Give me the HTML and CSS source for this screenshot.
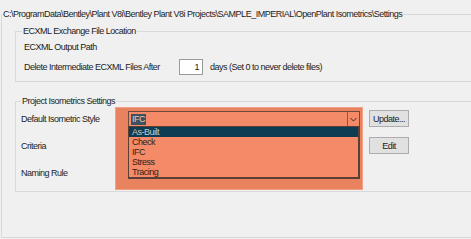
FILE: index.html
```html
<!DOCTYPE html>
<html>
<head>
<meta charset="utf-8">
<link rel="stylesheet" href="styles.css">
</head>
<body>
<fieldset class="outer">
  <legend class="path">C:\ProgramData\Bentley\Plant V8i\Bentley Plant V8i Projects\SAMPLE_IMPERIAL\OpenPlant Isometrics\Settings</legend>
  <fieldset class="grp ecxml">
    <legend>ECXML Exchange File Location</legend>
    <div class="line">ECXML Output Path</div>
    <div class="line del">
      <span class="del-label">Delete Intermediate ECXML Files After</span>
      <span class="num">1</span>
      <span class="hint">days (Set 0 to never delete files)</span>
    </div>
  </fieldset>
  <fieldset class="grp iso">
    <legend>Project Isometrics Settings</legend>
    <div class="grid">
      <div class="highlight"></div>
      <span class="lbl">Default Isometric Style</span>
      <div class="combo">
        <span class="combo-text"><span class="sel">IFC</span></span>
        <span class="arrow"><svg width="7" height="5" viewBox="0 0 7 5"><path d="M0.5 1 L3.5 4 L6.5 1" fill="none" stroke="#3b2a24" stroke-width="1"/></svg></span>
        <ul class="droplist">
          <li class="active">As-Built</li>
          <li>Check</li>
          <li>IFC</li>
          <li>Stress</li>
          <li>Tracing</li>
        </ul>
      </div>
      <button class="btn">Update...</button>
      <span class="lbl">Criteria</span>
      <div class="empty"></div>
      <button class="btn">Edit</button>
      <span class="lbl">Naming Rule</span>
    </div>
  </fieldset>
</fieldset>
</body>
</html>
```
FILE: styles.css
```css
html, body {
  margin: 0;
  padding: 0;
  background: #f0f0f0;
  width: 471px;
  height: 239px;
  overflow: hidden;
}
body {
  font-family: "Liberation Sans", Arial, sans-serif;
  font-size: 9px;
  letter-spacing: -0.5px;
  color: #1c1c1c;
}
fieldset {
  min-width: 0;
  box-sizing: border-box;
  border: 1px solid #d9d9d9;
  border-right: none;
}
legend {
  line-height: 12px;
  height: 12px;
  padding: 0 1px;
}
.outer {
  margin: 8px 0 0 1px;
  padding: 5px 0 0 0;
  width: 470px;
  height: 230px;
}
.grp {
  margin: 0 0 0 13px;
}
.ecxml {
  padding: 4px 0 6px 8px;
}
.ecxml legend {
  margin-left: -2px;
}
.line {
  line-height: 12px;
  height: 12px;
}
.del {
  margin-top: 6px;
  height: 16px;
  display: flex;
  align-items: center;
}
.del-label {
  width: 155px;
}
.num {
  box-sizing: border-box;
  width: 24px;
  height: 16px;
  line-height: 14px;
  background: #fff;
  border: 1px solid #9a9a9a;
  text-align: right;
  padding-right: 3px;
}
.hint {
  margin-left: 7px;
}
.iso {
  margin-top: 13px;
  padding: 3px 0 10px 5px;
}
.grid {
  position: relative;
  display: grid;
  grid-template-columns: 98px 232px 40px;
  grid-template-rows: 17px 17px 17px;
  column-gap: 9px;
  row-gap: 10px;
  align-items: center;
}
.highlight {
  position: absolute;
  left: 94px;
  top: -3px;
  width: 248px;
  height: 83px;
  box-sizing: border-box;
  background: #e9835f;
  border: 1px solid #f2a284;
  z-index: 0;
}
.lbl {
  line-height: 12px;
}
.combo {
  position: relative;
  z-index: 1;
  box-sizing: border-box;
  height: 16px;
  align-self: end;
  border: 1px solid #6e4a3d;
  background: #f58a68;
  display: flex;
}
.combo-text {
  flex: 1;
  padding: 1px 0 0 2px;
  line-height: 12px;
}
.sel {
  display: inline-block;
  background: #3d5260;
  color: #f2c2ac;
  padding: 0 1px;
  line-height: 11px;
}
.arrow {
  width: 11px;
  border-left: 1px solid #8a5a48;
  display: flex;
  align-items: center;
  justify-content: center;
}
.droplist {
  position: absolute;
  left: -1px;
  right: -1px;
  top: 14px;
  margin: 0;
  padding: 0;
  list-style: none;
  background: #f58a68;
  border: 1px solid #5b3f35;
  border-bottom-width: 2px;
  border-right-width: 2px;
  color: #2e1e18;
}
.droplist li {
  height: 10px;
  line-height: 10px;
  padding-left: 3px;
}
.droplist li.active {
  background: #0e3c52;
  color: #c9c9c9;
}
.btn {
  font: inherit;
  letter-spacing: inherit;
  color: #1c1c1c;
  height: 17px;
  padding: 0;
  background: #e1e1e1;
  border: 1px solid #adadad;
  border-radius: 0;
}
```
